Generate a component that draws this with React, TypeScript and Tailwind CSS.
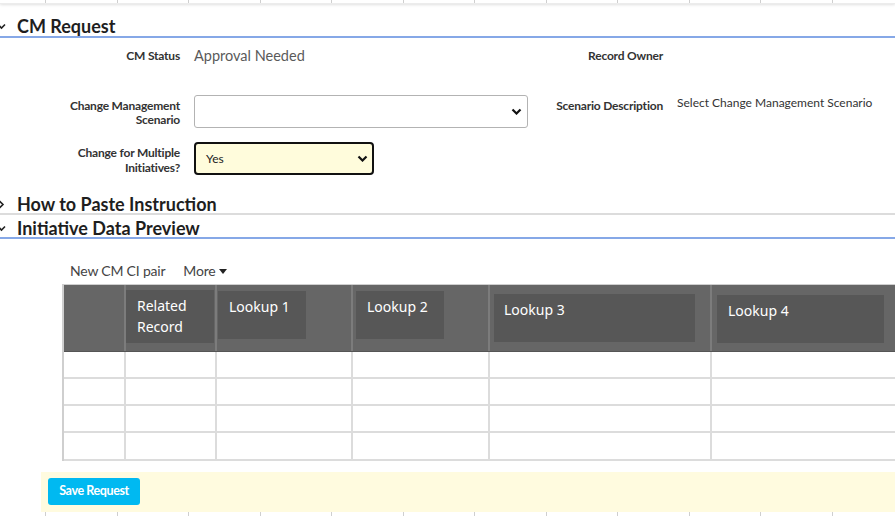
import React from "react";

function DownChevron() {
  return (
    <svg width="9" height="7" viewBox="0 0 9 7" className="-ml-[3px]">
      <polyline points="1,1.5 4.5,5 8,1.5" fill="none" stroke="#222" strokeWidth="1.6" />
    </svg>
  );
}

function RightChevron() {
  return (
    <svg width="7" height="9" viewBox="0 0 7 9" className="-ml-[2px]">
      <polyline points="1.5,1 5,4.5 1.5,8" fill="none" stroke="#222" strokeWidth="1.6" />
    </svg>
  );
}

function SelectChevron() {
  return (
    <svg width="11" height="7" viewBox="0 0 11 7">
      <polyline points="1.5,1.5 5.5,5.5 9.5,1.5" fill="none" stroke="#111" strokeWidth="2.2" />
    </svg>
  );
}

function Ticks({ h }: { h: string }) {
  const ticks = Array.from({ length: 12 });
  return (
    <div className={`flex pl-[45px] shrink-0 ${h}`}>
      {ticks.map((_, i) => (
        <div key={i} className="w-[71.5px] h-full shrink-0 border-l border-[#cfcfcf]" />
      ))}
    </div>
  );
}

const cellWidths = ["w-[60px]", "w-[91px]", "w-[136px]", "w-[137px]", "w-[222px]", "w-[200px]"];

export default function App() {
  const rowHeights = ["h-[27px]", "h-[27px]", "h-[27px]", "h-[28px]"];
  return (
    <div className="w-[895px] h-[516px] overflow-hidden bg-white flex flex-col font-['Lato',sans-serif] text-[#333]">
      {/* top strip */}
      <div className="shrink-0 shadow-[0_1px_3px_rgba(0,0,0,0.12)] border-b border-[#ececec]">
        <Ticks h="h-[3px]" />
      </div>

      {/* CM Request header */}
      <div className="shrink-0 pt-[13px] pb-[1px] border-b-2 border-[#86a8e7] flex items-center">
        <div className="w-[17px] h-[18px] flex items-center">
          <DownChevron />
        </div>
        <h2 className="text-[18px] leading-[18px] font-bold text-[#1e1e1e]">CM Request</h2>
      </div>

      {/* Row 1 */}
      <div className="shrink-0 flex items-center mt-[10px] h-[16px]">
        <div className="w-[180px] text-right text-[12px] tracking-[-0.2px] font-bold text-[#333]">CM Status</div>
        <div className="ml-[14px] w-[334px] text-[14.5px] leading-[16px] text-[#5a5a5a]">Approval Needed</div>
        <div className="w-[135px] text-right text-[12px] tracking-[-0.2px] font-bold text-[#333]">Record Owner</div>
      </div>

      {/* Row 2 */}
      <div className="shrink-0 flex items-start mt-[31px]">
        <div className="w-[180px] text-right text-[12px] tracking-[-0.2px] leading-[14px] font-bold pt-[4px]">
          Change Management
          <br />
          Scenario
        </div>
        <div className="ml-[14px] w-[334px] h-[33px] border border-[#b3b3b3] rounded-[3px] bg-white flex items-center justify-end pr-[5px]">
          <SelectChevron />
        </div>
        <div className="w-[135px] text-right text-[12px] tracking-[-0.2px] leading-[14px] font-bold pt-[4px]">Scenario Description</div>
        <div className="ml-[14px] pt-[1px] text-[12px] leading-[14px] text-[#333]">Select Change Management Scenario</div>
      </div>

      {/* Row 3 */}
      <div className="shrink-0 flex items-start mt-[14px]">
        <div className="w-[180px] text-right text-[12px] tracking-[-0.2px] leading-[14.5px] font-bold pt-[4px]">
          Change for Multiple
          <br />
          Initiatives?
        </div>
        <div className="ml-[14px] w-[180px] h-[33px] border-2 border-[#111] rounded-[4px] bg-[#fffcdc] flex items-center justify-between pl-[10px] pr-[4px]">
          <span className="text-[12px] text-[#222]">Yes</span>
          <SelectChevron />
        </div>
      </div>

      {/* How to Paste header */}
      <div className="shrink-0 mt-[20px] border-b-2 border-[#dcdcdc] flex items-center">
        <div className="w-[17px] h-[18px] flex items-center">
          <RightChevron />
        </div>
        <h2 className="text-[18px] leading-[18px] font-bold text-[#1e1e1e]">How to Paste Instruction</h2>
      </div>

      {/* Initiative Data Preview header */}
      <div className="shrink-0 pt-[4px] border-b-2 border-[#86a8e7] flex items-center">
        <div className="w-[17px] h-[18px] flex items-center">
          <DownChevron />
        </div>
        <h2 className="text-[18px] leading-[18px] font-bold text-[#1e1e1e]">Initiative Data Preview</h2>
      </div>

      {/* toolbar */}
      <div className="shrink-0 mt-[24px] ml-[70px] flex items-center gap-[18px] h-[16px] text-[14px] leading-[16px] text-[#444]">
        <span className="tracking-[-0.2px]">New CM CI pair</span>
        <span className="flex items-center gap-[4px] tracking-[-0.2px]">
          More
          <svg width="8" height="5" viewBox="0 0 8 5">
            <polygon points="0,0 8,0 4,5" fill="#222" />
          </svg>
        </span>
      </div>

      {/* table */}
      <div className="shrink-0 mt-[5px] ml-[62px] w-[900px] border-t border-l-2 border-[#cfcfcf] font-['Noto_Sans',sans-serif]">
        <div className="flex h-[67px] bg-[#666666] border-b border-[#555]">
          <div className={`${cellWidths[0]} shrink-0`} />
          <div className={`${cellWidths[1]} shrink-0 border-l-2 border-[#7c7c7c]`}>
            <div className="mt-[5px] w-[88px] h-[53px] bg-[#575757] pl-[11px] pt-[5px] text-[14px] leading-[21px] text-white">
              Related
              <br />
              Record
            </div>
          </div>
          <div className={`${cellWidths[2]} shrink-0 border-l-2 border-[#7c7c7c]`}>
            <div className="mt-[6px] ml-[1px] w-[88px] h-[48px] bg-[#575757] pl-[11px] pt-[5px] text-[14px] leading-[21px] text-white">
              Lookup 1
            </div>
          </div>
          <div className={`${cellWidths[3]} shrink-0 border-l-2 border-[#7c7c7c]`}>
            <div className="mt-[6px] ml-[3px] w-[88px] h-[48px] bg-[#575757] pl-[11px] pt-[5px] text-[14px] leading-[21px] text-white">
              Lookup 2
            </div>
          </div>
          <div className={`${cellWidths[4]} shrink-0 border-l-2 border-[#7c7c7c]`}>
            <div className="mt-[9px] ml-[4px] w-[201px] h-[48px] bg-[#575757] pl-[10px] pt-[5px] text-[14px] leading-[21px] text-white">
              Lookup 3
            </div>
          </div>
          <div className={`${cellWidths[5]} shrink-0 border-l-2 border-[#7c7c7c]`}>
            <div className="mt-[10px] ml-[5px] w-[167px] h-[48px] bg-[#575757] pl-[11px] pt-[5px] text-[14px] leading-[21px] text-white">
              Lookup 4
            </div>
          </div>
        </div>
        {rowHeights.map((rh, r) => (
          <div key={r} className={`flex ${rh} border-b-2 border-[#dcdcdc]`}>
            {cellWidths.map((w, c) => (
              <div key={c} className={`${w} shrink-0 h-full ${c > 0 ? "border-l-2 border-[#dcdcdc]" : ""}`} />
            ))}
          </div>
        ))}
      </div>

      {/* footer */}
      <div className="shrink-0 mt-[11px] ml-[41px] h-[40px] bg-[#fffbdf] pl-[7px] pt-[6px]">
        <button className="w-[92px] h-[27px] rounded-[3px] bg-[#00b9f1] text-white text-[12.5px] font-bold tracking-[-0.4px] flex items-center justify-center">
          Save Request
        </button>
      </div>

      <Ticks h="h-[4px]" />
    </div>
  );
}
